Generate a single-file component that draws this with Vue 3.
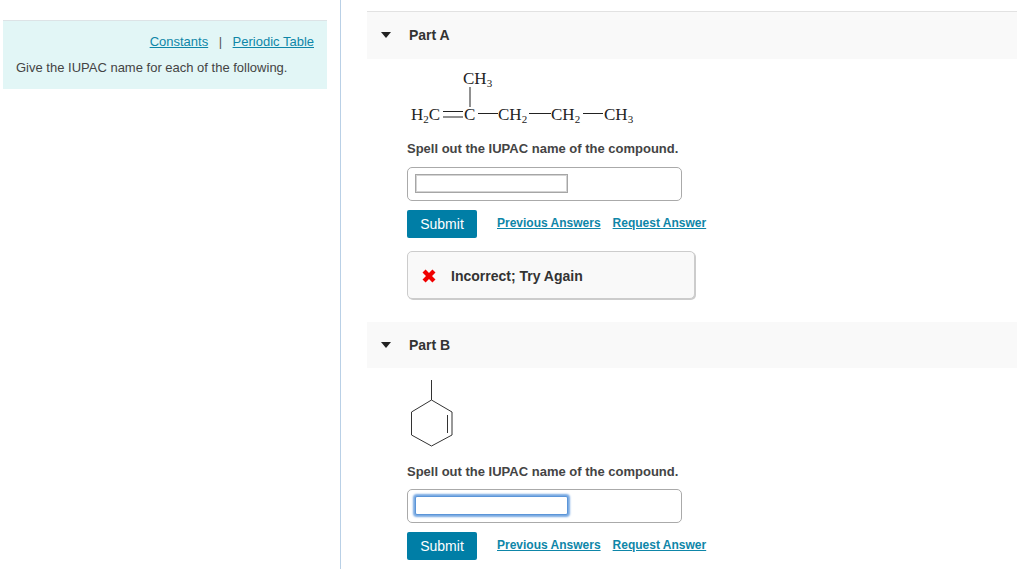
<script setup>
const parts = [
  { id: 'a', name: 'Part A', focus: false, feedback: true },
  { id: 'b', name: 'Part B', focus: true, feedback: false },
]
</script>

<template>
  <div class="page">
    <aside class="side">
      <div class="intro">
        <div class="tools">
          <a class="tool">Constants</a><span class="sep">|</span><a class="tool">Periodic Table</a>
        </div>
        <p class="lead">Give the IUPAC name for each of the following.</p>
      </div>
    </aside>
    <main class="main">
      <section v-for="p in parts" :key="p.id" class="part" :class="'part-' + p.id">
        <header class="head">
          <span class="caret"></span>
          <h2 class="title">{{ p.name }}</h2>
        </header>
        <div class="body">
          <svg v-if="p.id === 'a'" class="mol mol-a" width="240" height="72" viewBox="0 0 240 72">
            <g class="chem">
              <text x="56" y="25">CH<tspan class="sub" dy="3">3</tspan></text>
              <text x="4" y="61">H<tspan class="sub" dy="3">2</tspan><tspan dy="-3">C</tspan></text>
              <text x="57" y="61">C</text>
              <text x="91" y="61">CH<tspan class="sub" dy="3">2</tspan></text>
              <text x="144" y="61">CH<tspan class="sub" dy="3">2</tspan></text>
              <text x="197" y="61">CH<tspan class="sub" dy="3">3</tspan></text>
            </g>
            <g stroke="#222" stroke-width="1" fill="none">
              <path d="M63 28V48" />
              <path d="M36 52.5H56M36 58H56" />
              <path d="M71 54.5H91" />
              <path d="M122 54.5H144" />
              <path d="M176 54.5H196" />
            </g>
          </svg>
          <svg v-else class="mol mol-b" width="60" height="86" viewBox="0 0 60 86">
            <g stroke="#333" stroke-width="1" fill="none">
              <path d="M24.5 12V32L45 44V67L24.5 78L4.5 67V44L24.5 32" />
              <path d="M40.5 47V65" />
            </g>
          </svg>
          <label class="prompt">Spell out the IUPAC name of the compound.</label>
          <div class="answer">
            <input class="field" :class="{ focused: p.focus }" type="text" />
          </div>
          <div class="actions">
            <button class="submit" type="button">Submit</button>
            <a class="act">Previous Answers</a>
            <a class="act">Request Answer</a>
          </div>
          <div v-if="p.feedback" class="alert">
            <svg class="x" width="14" height="14" viewBox="0 0 14 14">
              <path d="M3.6 .6L7 4L10.4 .6L13.5 3.6L10 7L13.5 10.4L10.4 13.4L7 10L3.6 13.4L.5 10.4L4 7L.5 3.6Z" fill="#f00000" />
            </svg>
            <span>Incorrect; Try Again</span>
          </div>
        </div>
      </section>
    </main>
  </div>
</template>

<style scoped>
.page {
  display: flex;
  width: 1017px;
  height: 569px;
  overflow: hidden;
  background: #fff;
  font-family: "Liberation Sans", Arial, sans-serif;
  color: #333;
}
.side {
  box-sizing: border-box;
  width: 341px;
  flex: none;
  padding: 20px 13px 0 3px;
  border-right: 1px solid #b9d0e6;
}
.intro {
  box-sizing: border-box;
  height: 69px;
  padding: 13px 13px 0;
  background: #e2f6f6;
  border-top: 1px solid #dde3e6;
}
.tools {
  display: flex;
  justify-content: flex-end;
  font-size: 13px;
  line-height: 16px;
}
.tool {
  color: #0e86a8;
  text-decoration: underline;
}
.sep {
  margin: 0 10.5px;
  color: #555;
}
.lead {
  margin: 10px 0 0;
  font-size: 13px;
  line-height: 16px;
  color: #444;
}
.main {
  flex: 1;
  padding: 11px 0 0 26px;
  min-width: 0;
}
.part-b {
  margin-top: 23px;
}
.head {
  display: flex;
  align-items: center;
  height: 48px;
  box-sizing: border-box;
  background: #f9f9f9;
  border-top: 1px solid #e2e2e2;
  padding: 0 0 1px 14px;
}
.part-b .head {
  height: 46px;
  border-top: 0;
}
.caret {
  width: 0;
  height: 0;
  border-left: 5.5px solid transparent;
  border-right: 5.5px solid transparent;
  border-top: 6px solid #222;
}
.title {
  margin: 0 0 0 18px;
  font-size: 14px;
  font-weight: 700;
  line-height: 16px;
  color: #333;
}
.body {
  padding-left: 40px;
}
.mol {
  display: block;
}
.chem text {
  font-family: "Liberation Serif", "Times New Roman", serif;
  font-size: 17px;
  fill: #222;
}
.chem .sub {
  font-size: 11px;
}
.prompt {
  display: block;
  margin-top: 10px;
  font-size: 13px;
  font-weight: 700;
  line-height: 16px;
  color: #444;
}
.answer {
  box-sizing: border-box;
  width: 275px;
  height: 34px;
  margin-top: 10px;
  padding: 6px 0 0 7px;
  border: 1px solid #aaa;
  border-radius: 5px;
  background: #fff;
}
.part-b .answer {
  margin-top: 9px;
}
.field {
  display: block;
  box-sizing: border-box;
  width: 153px;
  height: 19px;
  padding: 0;
  border: 1px solid #a6a6a6;
  box-shadow: inset 0 0 0 1px #d4d4d4;
  background: #fff;
  outline: none;
}
.field.focused {
  border: 1px solid #5b95d8;
  border-radius: 2px;
  box-shadow: 0 0 2px 2px #76a8e2;
}
.actions {
  display: flex;
  align-items: center;
  margin-top: 9px;
  height: 28px;
}
.submit {
  width: 70px;
  height: 28px;
  padding: 0;
  border: 0;
  border-radius: 2px;
  background: #007ea6;
  color: #fff;
  font-family: inherit;
  font-size: 14px;
}
.act {
  margin-left: 12px;
  margin-top: -3px;
  font-size: 12px;
  font-weight: 700;
  color: #0e86a8;
  text-decoration: underline;
}
.submit + .act {
  margin-left: 20px;
}
.alert {
  display: flex;
  align-items: center;
  box-sizing: border-box;
  width: 288px;
  height: 48px;
  margin-top: 13px;
  padding: 1px 0 0 14px;
  border: 1px solid #ccc;
  border-radius: 5px;
  background: #f9f9f9;
  box-shadow: 1px 1px 0 #ccc;
  font-size: 14px;
  font-weight: 700;
  color: #333;
}
.x {
  margin-right: 15px;
}
</style>
